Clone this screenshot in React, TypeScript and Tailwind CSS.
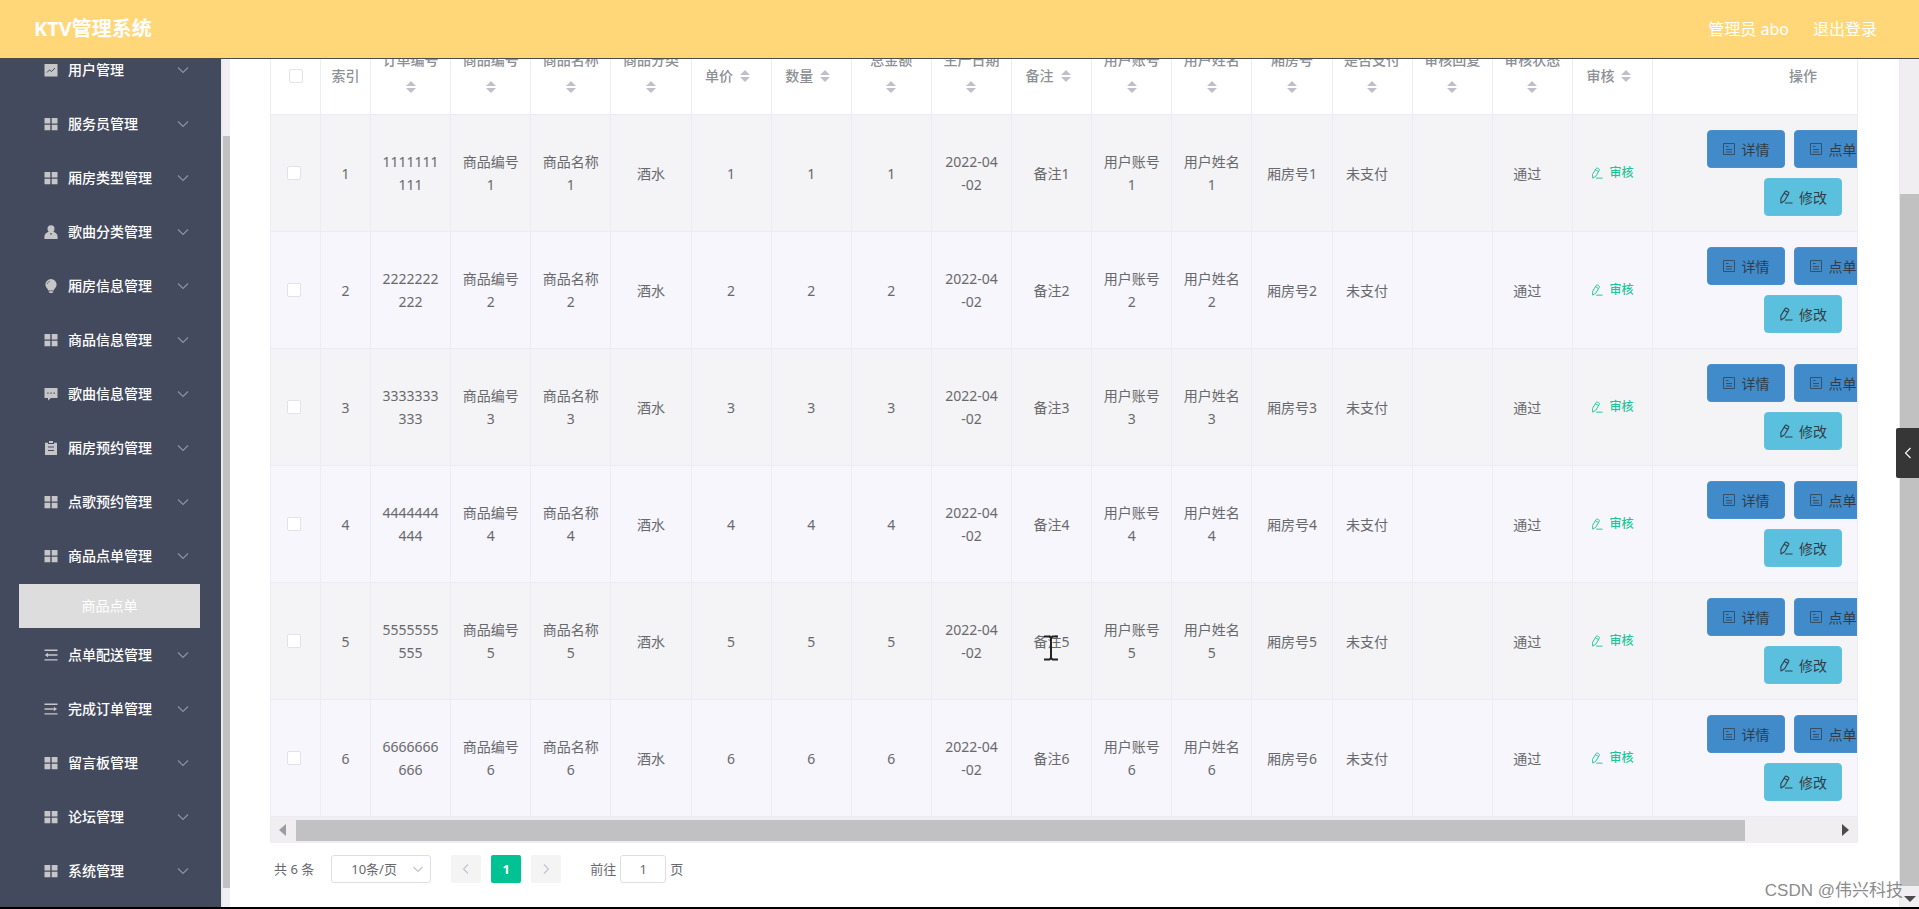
import React from "react";

type IconName = "chart" | "grid" | "user" | "bulb" | "chat" | "clipboard" | "outdent" | "indent";

const menu: { label: string; icon: IconName; open?: boolean }[] = [
  { label: "用户管理", icon: "chart" },
  { label: "服务员管理", icon: "grid" },
  { label: "厢房类型管理", icon: "grid" },
  { label: "歌曲分类管理", icon: "user" },
  { label: "厢房信息管理", icon: "bulb" },
  { label: "商品信息管理", icon: "grid" },
  { label: "歌曲信息管理", icon: "chat" },
  { label: "厢房预约管理", icon: "clipboard" },
  { label: "点歌预约管理", icon: "grid" },
  { label: "商品点单管理", icon: "grid", open: true },
  { label: "点单配送管理", icon: "outdent" },
  { label: "完成订单管理", icon: "indent" },
  { label: "留言板管理", icon: "grid" },
  { label: "论坛管理", icon: "grid" },
  { label: "系统管理", icon: "grid" },
];

const columns: { title: string; stacked: boolean }[] = [
  { title: "订单编号", stacked: true },
  { title: "商品编号", stacked: true },
  { title: "商品名称", stacked: true },
  { title: "商品分类", stacked: true },
  { title: "单价", stacked: false },
  { title: "数量", stacked: false },
  { title: "总金额", stacked: true },
  { title: "生产日期", stacked: true },
  { title: "备注", stacked: false },
  { title: "用户账号", stacked: true },
  { title: "用户姓名", stacked: true },
  { title: "厢房号", stacked: true },
  { title: "是否支付", stacked: true },
  { title: "审核回复", stacked: true },
  { title: "审核状态", stacked: true },
  { title: "审核", stacked: false },
];

const rows = [1, 2, 3, 4, 5, 6].map((n) => {
  const d = String(n);
  return {
    n,
    cells: [
      d.repeat(7) + "\n" + d.repeat(3),
      "商品编号\n" + d,
      "商品名称\n" + d,
      "酒水",
      d,
      d,
      d,
      "2022-04\n-02",
      "备注" + d,
      "用户账号\n" + d,
      "用户姓名\n" + d,
      "厢房号" + d,
    ],
  };
});

function MenuIcon({ name }: { name: IconName }) {
  return (
    <svg viewBox="0 0 14 14" className="h-3.5 w-3.5 shrink-0 text-[#c6c6c8]" fill="currentColor" aria-hidden="true">
      {name === "grid" && <path d="M.5 1H6.300v5.500H.5zM7.700 1h5.800v5.500H7.700zM.5 7.800h5.800v5.500H.5zM7.700 7.800h5.800v5.500H7.700z" />}
      {name === "chart" && (
        <>
          <path d="M.5 1h13v12.5H.5z" />
          <path d="M3 9.5l2.5-2.6 2 1.6L11 5" fill="none" stroke="#444a5e" strokeWidth="1" />
        </>
      )}
      {name === "user" && (
        <>
          <circle cx="7" cy="3.700" r="3.500" />
          <path d="M4.800 6.500h4.400l2.500 1.500c1.200.8 1.900 2.200 1.900 3.800V14H.4v-2.200c0-1.600.7-3 1.900-3.800z" />
          <path d="M6 8.200h2L7 10.200z" fill="#444a5e" />
        </>
      )}
      {name === "bulb" && (
        <>
          <path d="M7 0a5.600 5.600 0 0 1 5.600 5.600c0 2-1 3-2 4.200-.5.600-.8 1.200-.8 1.700H4.200c0-.5-.3-1.100-.8-1.700-1-1.200-2-2.200-2-4.200A5.600 5.600 0 0 1 7 0zM4.800 12.300h4.400v1l-1.200.7H6l-1.200-.7z" />
          <path d="M3.400 5C3.600 3.500 4.500 2.600 6 2.200" fill="none" stroke="#6d7180" strokeWidth=".9" />
        </>
      )}
      {name === "chat" && (
        <>
          <path d="M.5 1h13v10H7l-3 2.600V11H.5z" />
          <path d="M3.300 5.500h1.300v1.300H3.300zM6.400 5.500h1.300v1.300H6.400zM9.500 5.500h1.300v1.300H9.500z" fill="#444a5e" />
        </>
      )}
      {name === "clipboard" && (
        <>
          <path d="M1 1.800h3V3h6V1.800h3V14H1zM5 0h4v2H5z" />
          <path d="M4 6h6M4 9.500h6" stroke="#444a5e" strokeWidth="1" />
        </>
      )}
      {name === "outdent" && <path d="M.5 1.500h13v1.400H.5zM4 6.300h9.500v1.400H4zM.5 11.200h13v1.400H.5zM.8 7L4 4.800v4.400z" />}
      {name === "indent" && <path d="M.5 1.500h13v1.400H.5zM.5 6.300H10v1.400H.5zM.5 11.200h13v1.400H.5zM13 7L9.800 4.800v4.400z" />}
    </svg>
  );
}

function Chevron({ d, className }: { d: string; className: string }) {
  return (
    <svg viewBox="0 0 12 12" className={className} fill="none" stroke="currentColor" strokeWidth="1.100" aria-hidden="true">
      <path d={d} />
    </svg>
  );
}

function PenIcon({ className }: { className: string }) {
  return (
    <svg viewBox="0 0 14 14" className={className} fill="none" stroke="currentColor" strokeWidth="1.100" strokeLinejoin="round" aria-hidden="true">
      <path d="M1.800 8.600L6 1.700q.6-.9 1.500-.4l1.800 1q.9.600.4 1.500L5.600 10.800 2 13zM5.200 3.200l3.400 2M6 13h7.500" />
    </svg>
  );
}

function DocIcon() {
  return (
    <svg viewBox="0 0 14 14" className="h-3.5 w-3.5 shrink-0 opacity-75" fill="none" stroke="currentColor" strokeWidth="1" aria-hidden="true">
      <path d="M1.500 1.500h11v11h-11zM4 4.500h2.500M4 7.500h6M4 10h6" />
    </svg>
  );
}

function SortCaret() {
  return (
    <span className="inline-flex h-8 w-6 items-center justify-center">
      <svg viewBox="0 0 10 12" className="h-3 w-2.5" fill="#c0c0ca" aria-hidden="true">
        <path d="M5 0l5 5H0zM5 12L0 7h10z" />
      </svg>
    </span>
  );
}

function Checkbox({ label }: { label: string }) {
  return (
    <input
      type="checkbox"
      aria-label={label}
      className="block h-3.5 w-3.5 appearance-none rounded-[2px] border border-[#e2e2e8] bg-white"
    />
  );
}

export default function App() {
  return (
    <div className="flex h-screen flex-col overflow-hidden border-b-2 border-black bg-white font-['Noto_Sans','Noto_Sans_CJK_SC',sans-serif] text-sm text-[#68696d]">
      <header className="flex h-[59px] shrink-0 items-center justify-between border-b border-[#4d4a48] bg-[#ffd778] pl-[34px] pr-[42px] text-white">
        <h1 className="text-xl font-bold">KTV管理系统</h1>
        <nav className="flex items-center gap-6 text-base">
          <span>管理员 abo</span>
          <a href="#logout">退出登录</a>
        </nav>
      </header>

      <div className="flex min-h-0 flex-1">
        <aside className="flex w-[230px] shrink-0 overflow-hidden bg-[#444a5e]">
          <ul className="-mt-4 w-[221px] shrink-0">
            {menu.map((item) => (
              <li key={item.label}>
                <button type="button" className="flex h-[54px] w-full items-center gap-2.5 pl-11 pr-8 text-white">
                  <MenuIcon name={item.icon} />
                  <span className="font-medium">{item.label}</span>
                  <Chevron d="M1 3.500l5 5 5-5" className="ml-auto h-3 w-3 text-[#8f94a2]" />
                </button>
                {item.open && (
                  <a
                    href="#orders"
                    className="ml-[19px] mr-[21px] mt-px flex h-11 items-center justify-center bg-[#dddddd] text-white"
                  >
                    商品点单
                  </a>
                )}
              </li>
            ))}
          </ul>
          <div className="flex-1 border-l-2 border-[#e9e9ee] bg-[#f1eff3] pb-[19px] pt-[77px]">
            <div className="h-full bg-[#c1c1c1]" />
          </div>
        </aside>

        <main className="min-w-0 flex-1 overflow-hidden pl-10 pr-[41px]">
          <div className="-mt-[22px] overflow-hidden border-x border-[#ececf6]">
            <table className="w-[1682px] table-fixed border-separate border-spacing-0 text-center">
              <colgroup>
                <col className="w-[50px]" />
                <col className="w-[50px]" />
                {columns.map((c) => (
                  <col key={c.title} />
                ))}
                <col className="w-[300px]" />
              </colgroup>
              <thead className="text-[#8d9095]">
                <tr className="h-[78px]">
                  <th className="border-b border-r border-[#ececf6] p-0">
                    <div className="flex justify-center">
                      <Checkbox label="全选" />
                    </div>
                  </th>
                  <th className="border-b border-r border-[#ececf6] p-0 font-medium">索引</th>
                  {columns.map((c) => (
                    <th key={c.title} className="border-b border-r border-[#ececf6] p-0 font-medium">
                      <div className={c.stacked ? "flex flex-col items-center leading-[22px]" : "flex items-center justify-center"}>
                        <span>{c.title}</span>
                        <SortCaret />
                      </div>
                    </th>
                  ))}
                  <th className="border-b border-[#ececf6] p-0 font-medium">操作</th>
                </tr>
              </thead>
              <tbody className="leading-[23px]">
                {rows.map((row) => (
                  <tr key={row.n} className="h-[117px] odd:bg-[#f4f4f6] even:bg-[#f7f6fc]">
                    <td className="border-b border-r border-[#ececf6] p-0">
                      <div className="flex justify-center pr-1">
                        <Checkbox label={"选择 " + row.n} />
                      </div>
                    </td>
                    <td className="border-b border-r border-[#ececf6] p-0">{row.n}</td>
                    {row.cells.map((text, i) => (
                      <td key={i} className="whitespace-pre-line border-b border-r border-[#ececf6] p-0">
                        {text}
                      </td>
                    ))}
                    <td className="border-b border-r border-[#ececf6] p-0 pr-2.5">未支付</td>
                    <td className="border-b border-r border-[#ececf6] p-0" />
                    <td className="border-b border-r border-[#ececf6] p-0 pr-2.5">通过</td>
                    <td className="border-b border-r border-[#ececf6] p-0">
                      <button type="button" className="inline-flex items-center gap-1.5 text-xs font-medium text-[#1fc49a]">
                        <PenIcon className="h-3 w-3" />
                        审核
                      </button>
                    </td>
                    <td className="border-b border-[#ececf6] p-0 text-[#333d47]">
                      <div className="flex flex-col items-center gap-2.5">
                        <div className="flex gap-[9px]">
                          <button type="button" className="flex h-[38px] items-center gap-1.5 rounded border border-[#4a90cc] bg-[#428bca] px-3.5">
                            <DocIcon />
                            详情
                          </button>
                          <button type="button" className="flex h-[38px] w-[106px] items-center gap-1.5 rounded border border-[#4a90cc] bg-[#428bca] px-3.5">
                            <DocIcon />
                            点单
                          </button>
                        </div>
                        <button type="button" className="flex h-[38px] items-center gap-1.5 rounded border border-[#62c2de] bg-[#5bc0de] px-3.5">
                          <PenIcon className="h-3.5 w-3.5 shrink-0" />
                          修改
                        </button>
                      </div>
                    </td>
                  </tr>
                ))}
              </tbody>
            </table>
            <div className="flex h-[26px] items-center bg-[#f0eef1] px-2">
              <svg viewBox="0 0 7 12" className="h-3 w-[7px] shrink-0" fill="#9c9ca2" aria-hidden="true">
                <path d="M7 0v12L0 6z" />
              </svg>
              <div className="mx-2.5 h-[21px] flex-1 pr-[87px]">
                <div className="h-full bg-[#c1c0c3]" />
              </div>
              <svg viewBox="0 0 7 12" className="h-3 w-[7px] shrink-0" fill="#4c4c4c" aria-hidden="true">
                <path d="M0 0v12l7-6z" />
              </svg>
            </div>
          </div>

          <div className="mt-3 flex h-7 items-center pl-1 text-[13px]">
            <span>共 6 条</span>
            <div className="relative ml-[17px] h-7 w-[100px]">
              <select aria-label="每页条数" className="h-full w-full appearance-none rounded-[3px] border border-[#dcdfe6] bg-white pl-[19px] text-[13px]">
                <option>10条/页</option>
              </select>
              <Chevron d="M1.500 4l4.500 4.500L10.500 4" className="pointer-events-none absolute right-[7px] top-2 h-3 w-3 text-[#c0c4cc]" />
            </div>
            <button type="button" aria-label="上一页" className="ml-5 flex h-7 w-[30px] items-center justify-center rounded-[2px] bg-[#f4f4f5] text-[#c0c4cc]">
              <Chevron d="M8 1.500L3.500 6 8 10.500" className="h-3 w-3" />
            </button>
            <button type="button" className="ml-2.5 h-7 w-[30px] rounded-[2px] bg-[#00c292] font-bold text-white">
              1
            </button>
            <button type="button" aria-label="下一页" className="ml-2.5 flex h-7 w-[30px] items-center justify-center rounded-[2px] bg-[#f4f4f5] text-[#c0c4cc]">
              <Chevron d="M4 1.500L8.500 6 4 10.500" className="h-3 w-3" />
            </button>
            <label className="ml-[29px] flex items-center">
              前往
              <input type="text" aria-label="页码" defaultValue="1" className="mx-1 h-7 w-[46px] rounded-[3px] border border-[#dcdfe6] text-center text-[13px]" />
              页
            </label>
          </div>
        </main>

        <div className="flex w-5 shrink-0 flex-col items-center justify-between border-l border-[#eaeaec] bg-[#f0eef1] pt-[135px]">
          <div className="w-full flex-1 bg-[#c1c1c1]" />
          <svg viewBox="0 0 12 21" className="h-[21px] w-3 shrink-0" fill="#4c4c4c" aria-hidden="true">
            <path d="M0 10h12l-6 6z" />
          </svg>
        </div>
      </div>

      <button type="button" aria-label="展开侧栏" className="absolute right-0 top-[428px] flex h-[50px] w-[23px] items-center justify-center rounded-l-[2px] bg-[#363636] text-white">
        <Chevron d="M8.500 1L3.500 6l5 5" className="h-3 w-3" />
      </button>
      <svg viewBox="0 0 16 26" className="pointer-events-none absolute left-[1043px] top-[635px] h-[26px] w-4" fill="none" stroke="#222222" strokeWidth="2" aria-hidden="true">
        <path d="M1 1.500h5.500L8 3l1.500-1.500H15M8 3v20M1 24.500h5.500L8 23l1.500 1.500H15" />
      </svg>
      <span className="pointer-events-none absolute bottom-1.5 right-4 font-['Liberation_Sans','Noto_Sans_CJK_SC',sans-serif] text-[17px] text-[#8c8c8c]">
        CSDN @伟兴科技
      </span>
    </div>
  );
}
